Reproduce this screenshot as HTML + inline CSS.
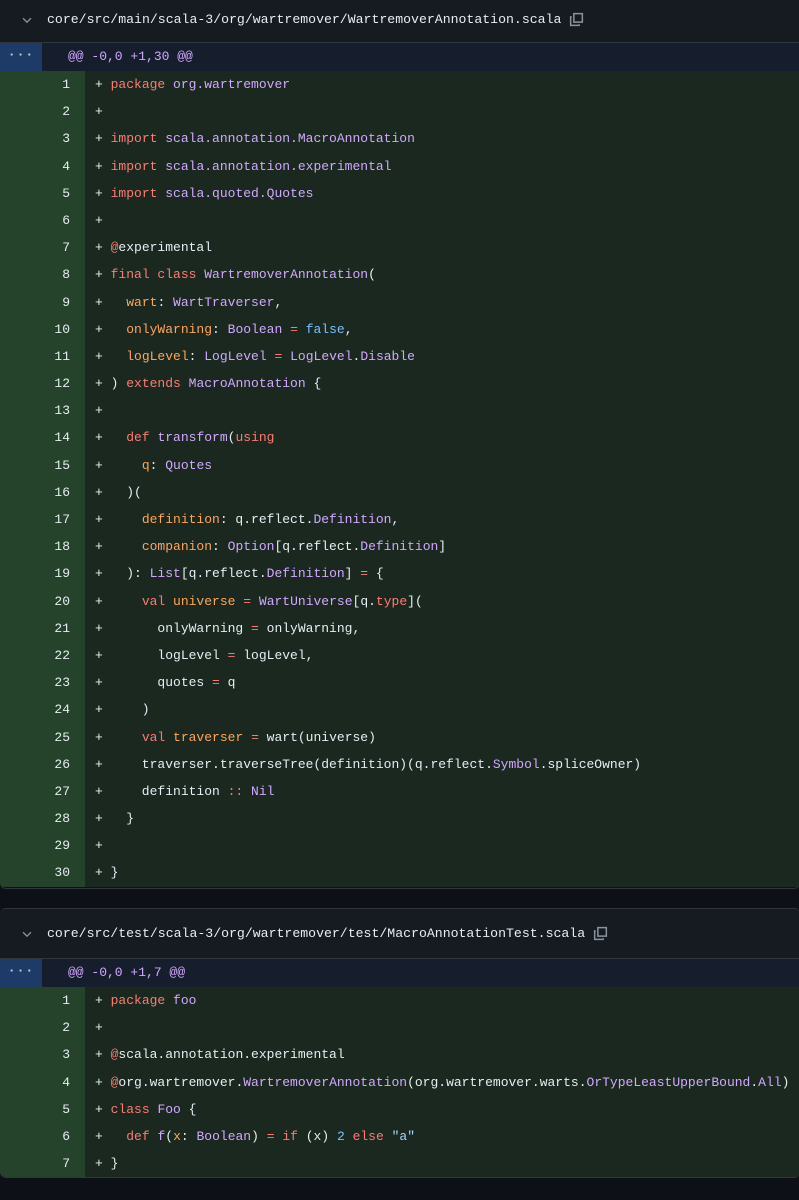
<!DOCTYPE html>
<html><head><meta charset="utf-8"><style>
*{margin:0;padding:0;box-sizing:border-box}
body{width:799px;height:1200px;background:#0d1117;font-family:"Liberation Mono",monospace;font-size:13px;color:#e6edf3;overflow:hidden;position:relative}
.blk{position:absolute;left:0;width:800px;border:1px solid #30363d;border-left:none;border-right:none;overflow:hidden}
.hd{height:44px;background:#161b22;border-bottom:1px solid #30363d;position:relative;font-size:13.2px}
.hd .chev{position:absolute;left:20px;top:14px;width:14px;height:14px}
.hd .nm{position:absolute;left:47px;top:13px;color:#e6edf3}
.hd svg.cp{position:absolute;top:12px;width:17px;height:17px}
.hunk{height:28px;background:#161d2d;position:relative;color:#8b949e}
.hunk .dots{position:absolute;left:0;top:0;width:42px;height:28px;background:#1e3a66;color:#c9d1d9;text-align:center;line-height:24px;font-weight:bold;letter-spacing:1px}
.hunk .t{position:absolute;left:68px;top:6px}
.r{height:27.2px;position:relative;background:#1a2820;white-space:pre}
.r .n{position:absolute;left:0;top:0;width:85px;height:100%;background:#25432b;text-align:right;padding-right:15px;line-height:27.2px;color:#e6edf3}
.r .c{position:absolute;left:95px;top:0;line-height:27.2px}
.k{color:#ff7b72}.t{color:#d2a8ff}.p{color:#ffa657}.b{color:#79c0ff}.s{color:#a5d6ff}
</style></head><body>

<div class="blk" style="top:-1px;height:890px;border-top:none;border-radius:0 0 6px 6px">
<div class="hd"><svg class="chev" viewBox="0 0 16 16"><path d="M3.5 6l4.5 4.5L12.5 6" fill="none" stroke="#8b949e" stroke-width="1.5"/></svg><span class="nm">core/src/main/scala-3/org/wartremover/WartremoverAnnotation.scala</span>
<svg class="cp" style="left:568px" viewBox="0 0 16 16"><path d="M5.5 2.5h8v8h-8z M3.5 5.5h-1v8h8v-1" fill="none" stroke="#8b949e" stroke-width="1.4"/></svg></div>
<div class="hunk"><div class="dots">···</div><span class="t">@@ -0,0 +1,30 @@</span></div>
<div class="r"><span class="n">1</span><span class="c">+ <span class="k">package</span> <span class="t">org.wartremover</span></span></div>
<div class="r"><span class="n">2</span><span class="c">+</span></div>
<div class="r"><span class="n">3</span><span class="c">+ <span class="k">import</span> <span class="t">scala.annotation.MacroAnnotation</span></span></div>
<div class="r"><span class="n">4</span><span class="c">+ <span class="k">import</span> <span class="t">scala.annotation.experimental</span></span></div>
<div class="r"><span class="n">5</span><span class="c">+ <span class="k">import</span> <span class="t">scala.quoted.Quotes</span></span></div>
<div class="r"><span class="n">6</span><span class="c">+</span></div>
<div class="r"><span class="n">7</span><span class="c">+ <span class="k">@</span>experimental</span></div>
<div class="r"><span class="n">8</span><span class="c">+ <span class="k">final class</span> <span class="t">WartremoverAnnotation</span>(</span></div>
<div class="r"><span class="n">9</span><span class="c">+   <span class="p">wart</span>: <span class="t">WartTraverser</span>,</span></div>
<div class="r"><span class="n">10</span><span class="c">+   <span class="p">onlyWarning</span>: <span class="t">Boolean</span> <span class="k">=</span> <span class="b">false</span>,</span></div>
<div class="r"><span class="n">11</span><span class="c">+   <span class="p">logLevel</span>: <span class="t">LogLevel</span> <span class="k">=</span> <span class="t">LogLevel</span>.<span class="t">Disable</span></span></div>
<div class="r"><span class="n">12</span><span class="c">+ ) <span class="k">extends</span> <span class="t">MacroAnnotation</span> {</span></div>
<div class="r"><span class="n">13</span><span class="c">+</span></div>
<div class="r"><span class="n">14</span><span class="c">+   <span class="k">def</span> <span class="t">transform</span>(<span class="k">using</span></span></div>
<div class="r"><span class="n">15</span><span class="c">+     <span class="p">q</span>: <span class="t">Quotes</span></span></div>
<div class="r"><span class="n">16</span><span class="c">+   )(</span></div>
<div class="r"><span class="n">17</span><span class="c">+     <span class="p">definition</span>: q.reflect.<span class="t">Definition</span>,</span></div>
<div class="r"><span class="n">18</span><span class="c">+     <span class="p">companion</span>: <span class="t">Option</span>[q.reflect.<span class="t">Definition</span>]</span></div>
<div class="r"><span class="n">19</span><span class="c">+   ): <span class="t">List</span>[q.reflect.<span class="t">Definition</span>] <span class="k">=</span> {</span></div>
<div class="r"><span class="n">20</span><span class="c">+     <span class="k">val</span> <span class="p">universe</span> <span class="k">=</span> <span class="t">WartUniverse</span>[q.<span class="k">type</span>](</span></div>
<div class="r"><span class="n">21</span><span class="c">+       onlyWarning <span class="k">=</span> onlyWarning,</span></div>
<div class="r"><span class="n">22</span><span class="c">+       logLevel <span class="k">=</span> logLevel,</span></div>
<div class="r"><span class="n">23</span><span class="c">+       quotes <span class="k">=</span> q</span></div>
<div class="r"><span class="n">24</span><span class="c">+     )</span></div>
<div class="r"><span class="n">25</span><span class="c">+     <span class="k">val</span> <span class="p">traverser</span> <span class="k">=</span> wart(universe)</span></div>
<div class="r"><span class="n">26</span><span class="c">+     traverser.traverseTree(definition)(q.reflect.<span class="t">Symbol</span>.spliceOwner)</span></div>
<div class="r"><span class="n">27</span><span class="c">+     definition <span class="k">::</span> <span class="t">Nil</span></span></div>
<div class="r"><span class="n">28</span><span class="c">+   }</span></div>
<div class="r"><span class="n">29</span><span class="c">+</span></div>
<div class="r"><span class="n">30</span><span class="c">+ }</span></div>
</div>

<div class="blk" style="top:908px;height:270px;border-radius:6px">
<div class="hd" style="height:50px"><svg class="chev" style="top:18px" viewBox="0 0 16 16"><path d="M3.5 6l4.5 4.5L12.5 6" fill="none" stroke="#8b949e" stroke-width="1.5"/></svg><span class="nm" style="top:17px">core/src/test/scala-3/org/wartremover/test/MacroAnnotationTest.scala</span>
<svg class="cp" style="left:592px;top:16px" viewBox="0 0 16 16"><path d="M5.5 2.5h8v8h-8z M3.5 5.5h-1v8h8v-1" fill="none" stroke="#8b949e" stroke-width="1.4"/></svg></div>
<div class="hunk"><div class="dots">···</div><span class="t">@@ -0,0 +1,7 @@</span></div>
<div class="r"><span class="n">1</span><span class="c">+ <span class="k">package</span> <span class="t">foo</span></span></div>
<div class="r"><span class="n">2</span><span class="c">+</span></div>
<div class="r"><span class="n">3</span><span class="c">+ <span class="k">@</span>scala.annotation.experimental</span></div>
<div class="r"><span class="n">4</span><span class="c">+ <span class="k">@</span>org.wartremover.<span class="t">WartremoverAnnotation</span>(org.wartremover.warts.<span class="t">OrTypeLeastUpperBound</span>.<span class="t">All</span>)</span></div>
<div class="r"><span class="n">5</span><span class="c">+ <span class="k">class</span> <span class="t">Foo</span> {</span></div>
<div class="r"><span class="n">6</span><span class="c">+   <span class="k">def</span> <span class="t">f</span>(<span class="p">x</span>: <span class="t">Boolean</span>) <span class="k">=</span> <span class="k">if</span> (x) <span class="b">2</span> <span class="k">else</span> <span class="s">"a"</span></span></div>
<div class="r"><span class="n">7</span><span class="c">+ }</span></div>
</div>
</body></html>
